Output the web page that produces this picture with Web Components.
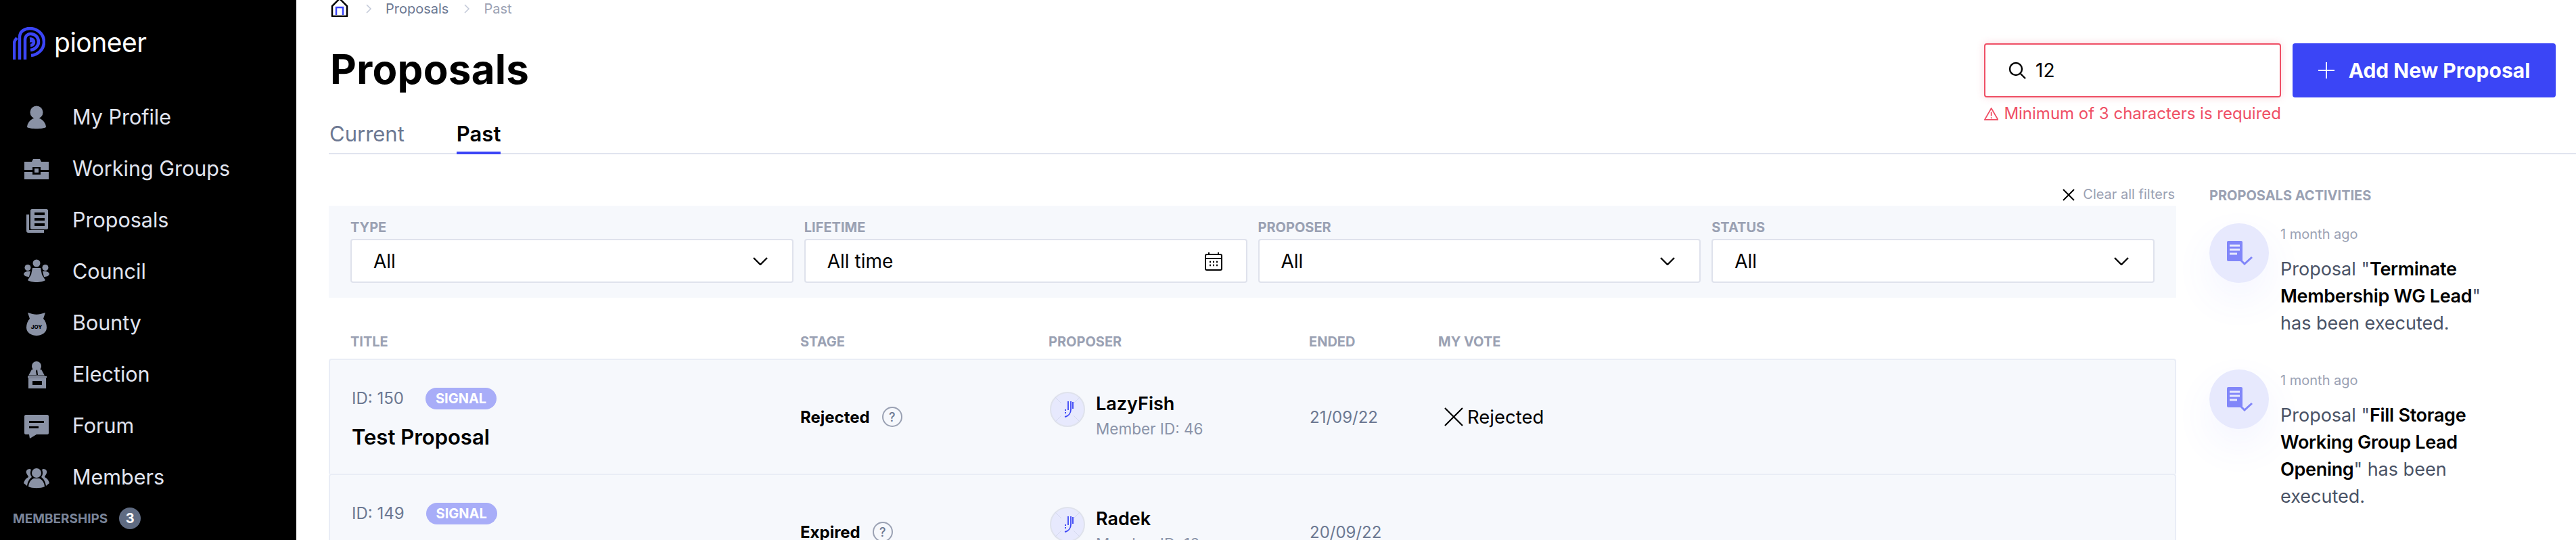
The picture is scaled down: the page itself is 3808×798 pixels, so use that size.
<!DOCTYPE html>
<html>
<head>
<meta charset="utf-8">
<title>Proposals</title>
<style>
  html, body { margin: 0; height: 100%; background: #fff; overflow: hidden; font-family: Inter, "Liberation Sans", sans-serif; }
</style>
</head>
<body>
<app-shell></app-shell>
<script>
const NAV_ICONS = {
  profile: `<circle cx="20" cy="14" r="9.500"/><path d="M6 36C6.500 29 11 25.500 15 23H25C29 25.500 33.500 29 34 36C29 39 11 39 6 36Z"/>`,
  groups: `<path d="M13 11L15 7H25L27 11H38V23H26V19H14V23H2V11Z"/><path d="M2 26H14V30H26V26H38V37H2Z"/><rect x="17" y="21" width="6" height="6"/>`,
  proposals: `<path d="M5 13H9V36H31V40H8C6 40 5 39 5 37Z"/><path fill-rule="evenodd" d="M13 5H35C36 5 37 6 37 7V33C37 34 36 35 35 35H13C12 35 11 34 11 33V7C11 6 12 5 13 5ZM17 10V14H32V10ZM17 18V22H32V18ZM17 26V30H32V26Z"/>`,
  council: `<circle cx="20" cy="9" r="5.500"/><circle cx="7" cy="15.500" r="4.500"/><circle cx="33" cy="15.500" r="4.500"/><path d="M14 16H26L28 26L33 34C28 38 12 38 7 34L12 26Z"/><path d="M1 25C2 22 4 21 8 21H11L9 29C5 29 2 28 1 25Z"/><path d="M39 25C38 22 36 21 32 21H29L31 29C35 29 38 28 39 25Z"/>`,
  bounty: `<path d="M7 6L14 8C18 9 22 9 26 8L33 6L30 15C33 18 35 23 35 28C35 36 27 40 20 40C13 40 5 36 5 28C5 23 7 18 10 15Z"/><text x="20" y="30" text-anchor="middle" font-family="Inter, sans-serif" font-size="8" font-weight="800" fill="#000">JOY</text>`,
  election: `<circle cx="20" cy="9" r="7"/><path d="M13 14H27L32 23H8Z"/><path d="M19 16L21 14L22 22H20Z" fill="#000"/><rect x="7" y="24" width="28" height="2.500"/><path fill-rule="evenodd" d="M8 26.500H34V42H8ZM14 31V37H28V31Z"/>`,
  forum: `<path fill-rule="evenodd" d="M4 5H36C37 5 38 6 38 7V32C38 33 37 34 36 34H20L10 40L9 34H4C3 34 2 33 2 32V7C2 6 3 5 4 5ZM9 14V17H31V14ZM9 22V25H23V22Z"/>`,
  members: `<circle cx="20" cy="15" r="7"/><path d="M8 35C9 27 13 24 16 23H24C27 24 31 27 32 35C27 38 13 38 8 35Z"/><path d="M10 9C6 9 4 12 5 15C6 18 8 19 8 21C4 23 2 26 1 30L6 34C7 28 9 24 13 21C11 18 10 15 12 10Z"/><path d="M30 9C34 9 36 12 35 15C34 18 32 19 32 21C36 23 38 26 39 30L34 34C33 28 31 24 27 21C29 18 30 15 28 10Z"/>`
};

class AppLogo extends HTMLElement {
  constructor() {
    super();
    this.attachShadow({ mode: "open" });
    this.shadowRoot.innerHTML = `
      <style>
        :host { display: flex; align-items: center; gap: 13px; height: 48px; }
        svg { width: 48px; height: 48px; display: block; }
        span { color: #fff; font-size: 39px; font-weight: 400; letter-spacing: -0.5px; line-height: 48px; margin-top: -3px; }
      </style>
      <svg viewBox="0 0 48 48" fill="none" stroke="#3b45f6" stroke-width="4.500">
        <path d="M2 48V24C2 21 3 19 6 16"/>
        <path d="M10 48V15C10 6 18 2 25 2C36 2 46 10 46 22C46 33 37 41 27 42"/>
        <path d="M18 48V19C18 13 22 10 26 10C33 10 38 15 38 22C38 28 33 33 26 34"/>
        <path d="M25 17.500C28 17 31 19 31 22C31 25 29 27 26 27"/>
        <path d="M25 21.500C26.500 21.500 27 22 27 22.500"/>
      </svg>
      <span>pioneer</span>`;
  }
}
customElements.define("app-logo", AppLogo);

class NavItem extends HTMLElement {
  constructor() {
    super();
    this.attachShadow({ mode: "open" });
  }

  connectedCallback() {
    this.shadowRoot.innerHTML = `
      <style>
        :host { display: flex; align-items: center; gap: 33px; height: 76px; padding-left: 34px; color: #e0e4ef; font-size: 30.500px; }
        svg { width: 40px; height: 40px; flex: none; fill: #8a92a5; overflow: visible; }
      </style>
      <svg viewBox="0 0 40 40">${NAV_ICONS[this.getAttribute("icon")]}</svg>
      <slot></slot>`;
  }
}
customElements.define("nav-item", NavItem);

class AppSidebar extends HTMLElement {
  constructor() {
    super();
    this.attachShadow({ mode: "open" });
    this.shadowRoot.innerHTML = `
      <style>
        :host { display: flex; flex-direction: column; flex: none; width: 438px; height: 798px; background: #000; box-sizing: border-box; padding-top: 40px; }
        app-logo { margin-left: 19px; margin-bottom: 46px; }
        .memberships { display: flex; align-items: center; gap: 17px; margin-top: 8px; padding-left: 19px; color: #7a8499; font-size: 19px; font-weight: 700; }
        .badge { width: 32px; height: 32px; border-radius: 50%; background: #5f6b82; color: #fff; display: flex; align-items: center; justify-content: center; font-size: 20px; }
      </style>
      <app-logo></app-logo>
      <nav-item icon="profile">My Profile</nav-item>
      <nav-item icon="groups">Working Groups</nav-item>
      <nav-item icon="proposals">Proposals</nav-item>
      <nav-item icon="council">Council</nav-item>
      <nav-item icon="bounty">Bounty</nav-item>
      <nav-item icon="election">Election</nav-item>
      <nav-item icon="forum">Forum</nav-item>
      <nav-item icon="members">Members</nav-item>
      <div class="memberships">MEMBERSHIPS <span class="badge">3</span></div>`;
  }
}
customElements.define("app-sidebar", AppSidebar);

class BreadCrumbs extends HTMLElement {
  constructor() {
    super();
    this.attachShadow({ mode: "open" });
    const chevron = `<svg class="chev" width="10" height="16" viewBox="0 0 10 16" fill="none" stroke="#c3c9d8" stroke-width="1.500"><path d="M2 2L8 8L2 14"/></svg>`;
    this.shadowRoot.innerHTML = `
      <style>
        :host { display: flex; align-items: center; height: 25px; font-size: 20px; color: #6c7892; padding-left: 3px; }
        .home { width: 26px; height: 25px; display: block; margin-right: 25px; }
        .chev { margin-right: 20px; }
        .crumb { margin-right: 22px; }
        .last { color: #9aa1b3; }
      </style>
      <svg class="home" viewBox="0 0 26 25" fill="none">
        <path d="M2 24V9L13 -2L24 9V24Z" stroke="#000" stroke-width="2.500" stroke-linejoin="round"/>
        <path d="M8 22V11H18V22M11 11" stroke="#3b45f6" stroke-width="2.500"/>
      </svg>
      ${chevron}<span class="crumb">Proposals</span>${chevron}<span class="last">Past</span>`;
  }
}
customElements.define("bread-crumbs", BreadCrumbs);

class SearchBox extends HTMLElement {
  constructor() {
    super();
    this.attachShadow({ mode: "open" });
    this.shadowRoot.innerHTML = `
      <style>
        :host { display: block; width: 439px; }
        .box { height: 80px; box-sizing: border-box; border: 2px solid #ef4f65; border-radius: 4px; box-shadow: 0 0 12px rgba(239,79,101,.22); display: flex; align-items: center; gap: 14px; padding-left: 34px; font-size: 28px; color: #000; background: #fff; }
        .box svg { width: 26px; height: 26px; }
        .error { display: flex; align-items: center; gap: 8px; margin-top: 8px; color: #ef4f65; font-size: 24px; line-height: 32px; white-space: nowrap; }
      </style>
      <div class="box">
        <svg viewBox="0 0 26 26" fill="none" stroke="#000" stroke-width="2.400"><circle cx="11" cy="11" r="9"/><path d="M17.500 17.500L25 25"/></svg>
        <span>12</span>
      </div>
      <div class="error">
        <svg width="24" height="22" viewBox="0 0 24 22" fill="none" stroke="#ef4f65" stroke-width="2"><path d="M12 2L23 21H1Z" stroke-linejoin="round"/><path d="M12 8V15M12 17V19"/></svg>
        <span>Minimum of 3 characters is required</span>
      </div>`;
  }
}
customElements.define("search-box", SearchBox);

class AddButton extends HTMLElement {
  constructor() {
    super();
    this.attachShadow({ mode: "open" });
    this.shadowRoot.innerHTML = `
      <style>
        :host { display: flex; align-items: center; justify-content: center; gap: 21px; width: 389px; height: 80px; background: #3b45f6; border-radius: 4px; color: #fff; font-size: 30px; font-weight: 700; }
      </style>
      <svg width="24" height="24" viewBox="0 0 24 24" stroke="#fff" stroke-width="2"><path d="M12 0V24M0 12H24"/></svg>
      <slot></slot>`;
  }
}
customElements.define("add-button", AddButton);

class PageHeader extends HTMLElement {
  constructor() {
    super();
    this.attachShadow({ mode: "open" });
    this.shadowRoot.innerHTML = `
      <style>
        :host { display: block; position: relative; height: 228px; box-sizing: border-box; border-bottom: 2px solid #e0e4ef; }
        .top { display: flex; justify-content: space-between; padding-right: 30px; }
        h1 { margin: 37px 0 0 2px; font-size: 60px; line-height: 80px; font-weight: 700; color: #000; letter-spacing: 0.3px; }
        .tabs { display: flex; gap: 77px; margin-top: 28px; padding-left: 1px; font-size: 31px; line-height: 56px; color: #6c7892; }
        .tabs .active { position: relative; color: #000; font-weight: 600; height: 56px; }
        .tabs .active::after { content: ""; position: absolute; left: 0; right: 0; bottom: -2px; height: 4px; background: #3b45f6; }
        .actions { display: flex; gap: 17px; margin-top: 64px; align-items: flex-start; }
      </style>
      <div class="top">
        <div>
          <bread-crumbs></bread-crumbs>
          <h1>Proposals</h1>
          <div class="tabs"><span>Current</span><span class="active">Past</span></div>
        </div>
        <div class="actions">
          <search-box></search-box>
          <add-button>Add New Proposal</add-button>
        </div>
      </div>`;
  }
}
customElements.define("page-header", PageHeader);

class FilterField extends HTMLElement {
  constructor() {
    super();
    this.attachShadow({ mode: "open" });
  }

  connectedCallback() {
    const calendar = this.getAttribute("icon") === "calendar";
    const icon = calendar
      ? `<svg width="28" height="28" viewBox="0 0 28 28" fill="none" stroke="#000" stroke-width="2"><rect x="2" y="4" width="24" height="23" rx="2"/><path d="M2 10H26M7 1V4M21 1V4"/><path d="M8 15H10M13 15H15M18 15H20M8 20H10M13 20H15M18 20H20" stroke-width="2.500"/></svg>`
      : `<svg width="22" height="12" viewBox="0 0 22 12" fill="none" stroke="#000" stroke-width="2.400"><path d="M1 1L11 11L21 1"/></svg>`;
    this.shadowRoot.innerHTML = `
      <style>
        :host { display: block; min-width: 0; }
        label { display: block; height: 29px; font-size: 20px; line-height: 24px; font-weight: 700; color: #9aa1b3; }
        .input { height: 65px; box-sizing: border-box; border: 2px solid #dfe2ec; border-radius: 4px; background: #fff; display: flex; align-items: center; justify-content: space-between; padding: 0 ${calendar ? 34 : 36}px 0 32px; font-size: 28px; color: #000; }
      </style>
      <label>${this.getAttribute("label")}</label>
      <div class="input"><span>${this.getAttribute("value")}</span>${icon}</div>`;
  }
}
customElements.define("filter-field", FilterField);

class FilterPanel extends HTMLElement {
  constructor() {
    super();
    this.attachShadow({ mode: "open" });
    this.shadowRoot.innerHTML = `
      <style>
        :host { display: block; }
        .clear { display: flex; justify-content: flex-end; align-items: center; gap: 12px; height: 76px; box-sizing: border-box; padding: 43px 2px 0 0; font-size: 20px; color: #9aa1b3; line-height: 33px; }
        .panel { display: grid; grid-template-columns: repeat(4, 1fr); gap: 16px; height: 136px; box-sizing: border-box; padding: 20px 32px 0; background: #f6f8fc; }
      </style>
      <div class="clear">
        <svg width="18" height="18" viewBox="0 0 18 18" stroke="#000" stroke-width="2"><path d="M1 1L17 17M17 1L1 17"/></svg>
        <span>Clear all filters</span>
      </div>
      <div class="panel">
        <filter-field label="TYPE" value="All"></filter-field>
        <filter-field label="LIFETIME" value="All time" icon="calendar"></filter-field>
        <filter-field label="PROPOSER" value="All"></filter-field>
        <filter-field label="STATUS" value="All"></filter-field>
      </div>`;
  }
}
customElements.define("filter-panel", FilterPanel);

const COLUMNS = "665px 367px 385px 191px 1fr";

class ProposalRow extends HTMLElement {
  constructor() {
    super();
    this.attachShadow({ mode: "open" });
  }

  connectedCallback() {
    const vote = this.getAttribute("vote");
    this.shadowRoot.innerHTML = `
      <style>
        :host { display: grid; grid-template-columns: ${COLUMNS}; align-items: center; height: 170px; box-sizing: border-box; border: 2px solid #e9edf6; border-bottom: 0; border-radius: 4px 4px 0 0; background: #f6f8fc; padding-left: 30px; margin: 0; }
        .id-line { display: flex; align-items: center; gap: 32px; height: 32px; padding-left: 2px; font-size: 24px; color: #6c7892; }
        .pill { height: 32px; line-height: 32px; padding: 0 15px; border-radius: 16px; background: #a8adf8; color: #fff; font-size: 20px; font-weight: 700; }
        .title { margin-top: 27px; padding-left: 2px; font-size: 31px; line-height: 28px; font-weight: 600; color: #000; white-space: nowrap; }
        .stage { display: flex; align-items: center; gap: 18px; font-size: 24px; font-weight: 700; color: #000; }
        .help { border: 2px solid #9aa1b3; border-radius: 50%; display: flex; align-items: center; justify-content: center; font-size: 18px; font-weight: 500; color: #6c7892; width: 26px; height: 26px; }
        .member { display: flex; gap: 16px; align-items: flex-start; padding-left: 2px; }
        .avatar { width: 52px; height: 52px; flex: none; display: block; }
        .name { font-size: 27px; line-height: 36px; font-weight: 600; color: #000; }
        .mid { font-size: 22.500px; line-height: 38px; color: #8a93a8; white-space: nowrap; }
        .date { font-size: 24px; color: #6c7892; padding-left: 1px; }
        .vote { display: flex; align-items: center; gap: 6px; padding-left: 9px; font-size: 27.500px; color: #000; }
      </style>
      <div>
        <div class="id-line"><span>ID: ${this.getAttribute("pid")}</span><span class="pill">SIGNAL</span></div>
        <div class="title">${this.getAttribute("heading")}</div>
      </div>
      <div class="stage"><span>${this.getAttribute("stage")}</span><span class="help">?</span></div>
      <div class="member">
        <svg class="avatar" viewBox="0 0 52 52" fill="none">
          <circle cx="26" cy="26" r="25" fill="#e7e9fd" stroke="#dfe2ec" stroke-width="2"/>
          <path d="M8 8L17 17M44 8L35 17M8 44L17 35M44 44L35 35" stroke="#d5d9ee"/>
          <path d="M31 14V26C31 32 27 36 22 37M34 15V25" stroke="#3b45f6" stroke-width="1.800"/>
          <path d="M27 14V27M22 27H24M22 31H24" stroke="#3b45f6" stroke-width="1.800"/>
        </svg>
        <div><div class="name">${this.getAttribute("member")}</div><div class="mid">Member ID: ${this.getAttribute("mid")}</div></div>
      </div>
      <div class="date">${this.getAttribute("ended")}</div>
      <div class="vote">${vote ? `<svg width="28" height="28" viewBox="0 0 28 28" stroke="#000" stroke-width="2.200"><path d="M1 1L27 27M27 1L1 27"/></svg><span>${vote}</span>` : ""}</div>`;
  }
}
customElements.define("proposal-row", ProposalRow);

class ProposalTable extends HTMLElement {
  constructor() {
    super();
    this.attachShadow({ mode: "open" });
    this.shadowRoot.innerHTML = `
      <style>
        :host { display: block; }
        .head { display: grid; grid-template-columns: ${COLUMNS}; height: 90px; box-sizing: border-box; padding: 53px 0 0 32px; font-size: 20px; line-height: 24px; font-weight: 700; color: #9aa1b3; }
      </style>
      <div class="head"><span>TITLE</span><span>STAGE</span><span>PROPOSER</span><span>ENDED</span><span>MY VOTE</span></div>
      <proposal-row pid="150" heading="Test Proposal" stage="Rejected" member="LazyFish" mid="46" ended="21/09/22" vote="Rejected"></proposal-row>
      <proposal-row pid="149" heading="Test Proposal" stage="Expired" member="Radek" mid="16" ended="20/09/22"></proposal-row>`;
  }
}
customElements.define("proposal-table", ProposalTable);

class ActivityItem extends HTMLElement {
  constructor() {
    super();
    this.attachShadow({ mode: "open" });
    this.shadowRoot.innerHTML = `
      <style>
        :host { display: flex; gap: 17px; }
        .icon { width: 88px; height: 88px; flex: none; border-radius: 50%; background: #e7e9fd; box-shadow: 0 24px 60px rgba(90,100,250,.07); }
        .icon svg { display: block; }
        .time { font-size: 20px; line-height: 32px; color: #9aa1b3; margin-bottom: 16px; }
        .text { width: 340px; font-size: 27px; line-height: 40px; color: #4a5366; }
        ::slotted(b) { color: #000; font-weight: 600; letter-spacing: -0.3px; }
      </style>
      <div class="icon">
        <svg width="88" height="88" viewBox="0 0 88 88">
          <rect x="26" y="26" width="23" height="30" rx="2" fill="#8186f9"/>
          <path d="M30 33H45M30 39H45M30 45H41" stroke="#e7e9fd" stroke-width="3"/>
          <path d="M46 54L52 60L63 50" fill="none" stroke="#8186f9" stroke-width="3"/>
        </svg>
      </div>
      <div>
        <div class="time">1 month ago</div>
        <div class="text"><slot></slot></div>
      </div>`;
  }
}
customElements.define("activity-item", ActivityItem);

class ActivityFeed extends HTMLElement {
  constructor() {
    super();
    this.attachShadow({ mode: "open" });
    this.shadowRoot.innerHTML = `
      <style>
        :host { display: block; padding-top: 49px; }
        h2 { margin: 0 0 29px; font-size: 20px; line-height: 24px; font-weight: 700; color: #9aa1b3; white-space: nowrap; }
        .list { display: flex; flex-direction: column; gap: 48px; }
      </style>
      <h2>PROPOSALS ACTIVITIES</h2>
      <div class="list"><slot></slot></div>`;
  }
}
customElements.define("activity-feed", ActivityFeed);

class AppShell extends HTMLElement {
  constructor() {
    super();
    this.attachShadow({ mode: "open" });
    this.shadowRoot.innerHTML = `
      <style>
        :host { display: flex; height: 798px; overflow: hidden; color: #000; font-family: Inter, "Liberation Sans", sans-serif; }
        main { flex: 1; min-width: 0; padding-left: 48px; overflow: hidden; }
        .content { display: grid; grid-template-columns: 2731px 1fr; gap: 49px; }
      </style>
      <app-sidebar></app-sidebar>
      <main>
        <page-header></page-header>
        <div class="content">
          <div>
            <filter-panel></filter-panel>
            <proposal-table></proposal-table>
          </div>
          <activity-feed>
            <activity-item>Proposal "<b>Terminate Membership WG Lead</b>" has been executed.</activity-item>
            <activity-item>Proposal "<b>Fill Storage Working Group Lead Opening</b>" has been executed.</activity-item>
          </activity-feed>
        </div>
      </main>`;
  }
}
customElements.define("app-shell", AppShell);
</script>
</body>
</html>
